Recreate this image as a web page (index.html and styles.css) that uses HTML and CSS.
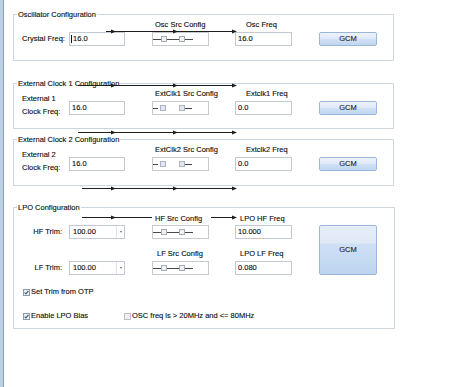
FILE: index.html
```html
<!DOCTYPE html>
<html>
<head>
<meta charset="utf-8">
<link rel="stylesheet" href="styles.css">
</head>
<body>
<div class="page">
  <div class="strip"></div>
  <div class="main">
    <fieldset class="group g1">
      <legend>Oscillator Configuration</legend>
      <div class="grid">
        <div class="cap c-src r1 pad3">Osc Src Config</div>
        <div class="cap c-out r1 pad11">Osc Freq</div>
        <div class="lbl r3">Crystal Freq:</div>
        <div class="field c-in r3"><span class="caret"></span>16.0</div>
        <div class="slider c-src r3"><i class="ln l8"></i><i class="th"></i><i class="ln l12"></i><i class="th"></i><i class="ln l8"></i></div>
        <div class="field c-out r3">16.0</div>
        <div class="btn c-btn r3">GCM</div>
      </div>
    </fieldset>

    <fieldset class="group g2">
      <legend>External Clock 1 Configuration</legend>
      <div class="grid">
        <div class="cap c-src r1 pad3">ExtClk1 Src Config</div>
        <div class="cap c-out r1 pad11">Extclk1 Freq</div>
        <div class="lbl two">External 1<br>Clock Freq:</div>
        <div class="field c-in r3">16.0</div>
        <div class="slider split c-src r3"><i class="ln l5"></i><i class="th"></i><i class="sp"></i><i class="th"></i><i class="ln l7"></i></div>
        <div class="field c-out r3">0.0</div>
        <div class="btn c-btn r3">GCM</div>
      </div>
    </fieldset>

    <fieldset class="group g3">
      <legend>External Clock 2 Configuration</legend>
      <div class="grid">
        <div class="cap c-src r1 pad3">ExtClk2 Src Config</div>
        <div class="cap c-out r1 pad11">Extclk2 Freq</div>
        <div class="lbl two">External 2<br>Clock Freq:</div>
        <div class="field c-in r3">16.0</div>
        <div class="slider split c-src r3"><i class="ln l5"></i><i class="th"></i><i class="sp"></i><i class="th"></i><i class="ln l7"></i></div>
        <div class="field c-out r3">0.0</div>
        <div class="btn c-btn r3">GCM</div>
      </div>
    </fieldset>

    <fieldset class="group g4">
      <legend>LPO Configuration</legend>
      <div class="grid">
        <div class="cap c-src r1 pad3">HF Src Config</div>
        <div class="cap c-out r1 pad5">LPO HF Freq</div>
        <div class="lbl right r3">HF Trim:</div>
        <div class="combo c-in r3"><span class="val">100.00</span><span class="drop"><i class="tri"></i></span></div>
        <div class="slider c-src r3"><i class="ln l8"></i><i class="th"></i><i class="ln l12"></i><i class="th"></i><i class="ln l8"></i></div>
        <div class="field c-out r3">10.000</div>

        <div class="cap c-src r5 pad5">LF Src Config</div>
        <div class="cap c-out r5 pad5">LPO LF Freq</div>
        <div class="lbl right r7">LF Trim:</div>
        <div class="combo c-in r7"><span class="val">100.00</span><span class="drop"><i class="tri"></i></span></div>
        <div class="slider c-src r7"><i class="ln l8"></i><i class="th"></i><i class="ln l12"></i><i class="th"></i><i class="ln l8"></i></div>
        <div class="field c-out r7">0.080</div>

        <div class="btn big c-btn">GCM</div>
      </div>
      <div class="checks">
        <div class="crow">
          <label class="chk"><span class="box on"><svg width="5" height="5" viewBox="0 0 5 5"><path d="M0.6 2.6 L1.9 3.9 L4.4 0.8" fill="none" stroke="#34588c" stroke-width="1.1"/></svg></span>Set Trim from OTP</label>
        </div>
        <div class="crow second">
          <label class="chk first"><span class="box on"><svg width="5" height="5" viewBox="0 0 5 5"><path d="M0.6 2.6 L1.9 3.9 L4.4 0.8" fill="none" stroke="#34588c" stroke-width="1.1"/></svg></span>Enable LPO Bias</label>
          <label class="chk"><span class="box off"></span>OSC freq is &gt; 20MHz and &lt;= 80MHz</label>
        </div>
      </div>
    </fieldset>
  </div>

  <svg class="wires" width="474" height="387" viewBox="0 0 474 387">
    <path d="M106 31.5H236 M78 85.5H236 M78 132.5H236 M82 188.5H236 M82 217.5H152 M211 217.5H236" stroke="#1e1e1e" stroke-width="1" fill="none"/>
    <g fill="#1e1e1e">
      <polygon points="116,31.5 111,29.5 111,33.5"/>
      <polygon points="178,31.5 173,29.5 173,33.5"/>
      <polygon points="237,31.5 232,29.5 232,33.5"/>
      <polygon points="116,85.5 111,83.5 111,87.5"/>
      <polygon points="178,85.5 173,83.5 173,87.5"/>
      <polygon points="237,85.5 232,83.5 232,87.5"/>
      <polygon points="116,132.5 111,130.5 111,134.5"/>
      <polygon points="178,132.5 173,130.5 173,134.5"/>
      <polygon points="237,132.5 232,130.5 232,134.5"/>
      <polygon points="116,188.5 111,186.5 111,190.5"/>
      <polygon points="178,188.5 173,186.5 173,190.5"/>
      <polygon points="237,188.5 232,186.5 232,190.5"/>
      <polygon points="116,217.5 111,215.5 111,219.5"/>
      <polygon points="237,217.5 232,215.5 232,219.5"/>
    </g>
  </svg>
</div>
</body>
</html>
```
FILE: styles.css
```css
* { box-sizing: border-box; }
html, body { margin: 0; background: #fff; }
body {
  font-family: "Liberation Sans", Arial, sans-serif;
  font-size: 7.5px;
  line-height: 10px;
  color: #0d0d0d;
  -webkit-text-stroke: 0.12px #0d0d0d;
}
.page {
  position: relative;
  display: flex;
  width: 474px;
  height: 387px;
  overflow: hidden;
}
.strip {
  flex: none;
  width: 4px;
  background: #bcd0e8;
  border-right: 1px solid #8aa1bd;
}
.main { padding: 9px 0 0 9px; }

.group {
  margin: 0;
  padding: 0 0 14px 8px;
  border: 1px solid #cdd5de;
  min-width: 0;
  width: 381px;
}
.group legend {
  padding: 0 1px;
  margin-left: -5px;
  line-height: 11px;
  font-size: 7.5px;
}
.g2 { margin-top: 17px; padding-bottom: 13px; }
.g3 { margin-top: 5px; }
.g4 { margin-top: 16px; width: 382px; padding-top: 1px; padding-bottom: 7px; }

.grid {
  display: grid;
  grid-template-columns: 47px 56px 27px 57px 26px 57px 27px 58px;
  grid-template-rows: 10px 2px 14px;
}
.g4 .grid { grid-template-rows: 10px 1px 14px 10px 10px 2px 14px; }

.r1 { grid-row: 1; }
.r3 { grid-row: 3; }
.r5 { grid-row: 5; }
.r7 { grid-row: 7; }
.c-in { grid-column: 2; }
.c-src { grid-column: 4; }
.c-out { grid-column: 6; }
.c-btn { grid-column: 8; }

.cap { white-space: nowrap; line-height: 10px; }
.pad3 { padding-left: 3px; }
.pad5 { padding-left: 5px; }
.pad11 { padding-left: 11px; }

.lbl { grid-column: 1; align-self: center; white-space: nowrap; }
.lbl.two { grid-row: 1 / 4; align-self: start; padding-top: 4px; line-height: 12.5px; }
.lbl.right { text-align: right; padding-right: 7px; }

.field {
  height: 14px;
  border: 1px solid #c3c9d0;
  background: #fff;
  padding: 0 2px 1px 2px;
  display: flex;
  align-items: center;
  white-space: nowrap;
}
.caret {
  display: inline-block;
  width: 1px;
  height: 8px;
  background: #111;
  margin-left: -1px;
  margin-right: 1px;
}

.combo {
  height: 14px;
  border: 1px solid #c3c9d0;
  background: #fff;
  display: flex;
  align-items: stretch;
}
.combo .val { flex: 1; padding: 0 0 1px 3px; display: flex; align-items: center; }
.combo .drop {
  width: 8px;
  border-left: 1px solid #dde2e8;
  display: flex;
  align-items: center;
  justify-content: center;
}
.tri {
  display: block;
  width: 0;
  height: 0;
  border-left: 1.5px solid transparent;
  border-right: 1.5px solid transparent;
  border-top: 2px solid #6a7078;
}

.slider {
  height: 14px;
  border: 1px solid #c6cbd1;
  background: #fff;
  display: flex;
  align-items: center;
}
.slider .ln { display: block; height: 1px; background: #4a4a4a; }
.l5 { width: 5px; }
.l7 { width: 7px; }
.l8 { width: 8px; }
.l12 { width: 12px; }
.slider .th {
  display: block;
  width: 6px;
  height: 6px;
  border: 1px solid #a3acb7;
  background: #eef1f5;
}
.split .th { background: #e2e8f0; border-color: #aab4c0; }
.split .ln.l5 { margin-right: 2px; }
.split .sp { display: block; width: 13px; }

.btn {
  height: 14px;
  border: 1px solid #9ab6da;
  border-radius: 2px;
  display: flex;
  align-items: center;
  justify-content: center;
  color: #2a2a2a;
  background: linear-gradient(#edf3fb 0%, #dfeaf7 45%, #cfe0f4 55%, #c0d6f0 100%);
}
.btn.big {
  grid-row: 3 / 8;
  height: auto;
  background: linear-gradient(#e5edf8 0%, #dfe9f6 36%, #cfe0f5 37%, #bdd4ef 100%);
}

.checks { margin-top: 12px; }
.crow { display: flex; align-items: center; height: 10px; padding-left: 1px; }
.crow.second { margin-top: 14px; }
.chk { display: flex; align-items: center; white-space: nowrap; }
.chk.first { width: 101px; }
.box {
  flex: none;
  width: 7px;
  height: 7px;
  margin-right: 1px;
  border: 1px solid #8f9aa7;
  background: linear-gradient(#e6ebf1, #f9fafc);
  display: flex;
  align-items: center;
  justify-content: center;
}
.box.off { border-color: #b9c0c8; background: #eef1f4; }
.box svg { display: block; }

.wires {
  position: absolute;
  left: 0;
  top: 0;
  pointer-events: none;
}
```
